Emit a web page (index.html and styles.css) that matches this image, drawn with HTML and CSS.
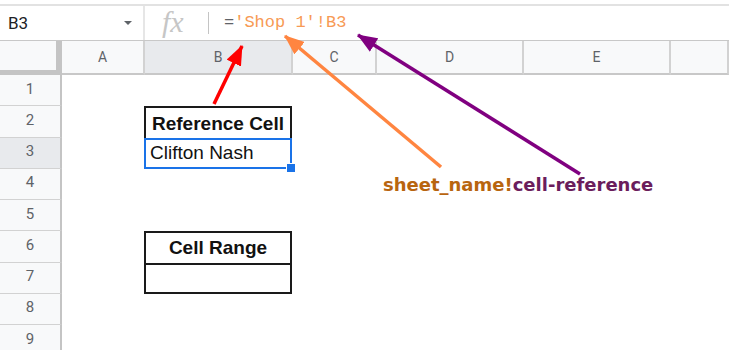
FILE: index.html
```html
<!DOCTYPE html>
<html lang="en">
<head>
    <meta charset="UTF-8">
    <meta name="viewport" content="width=device-width, initial-scale=1.0">
    <title>Sheet reference</title>
    <link rel="stylesheet" href="styles.css">
</head>
<body>
    <div class="edge"></div>
    <div class="formula-bar">
        <div class="name-box">
            <span class="cell-name">B3</span>
            <span class="caret"></span>
        </div>
        <div class="fx">fx</div>
        <div class="formula"><span class="eq">=</span><span class="ref">'Shop 1'!B3</span></div>
    </div>

    <div class="sheet">
        <div class="corner"></div>
        <div class="col-head">A</div>
        <div class="col-head active">B</div>
        <div class="col-head">C</div>
        <div class="col-head">D</div>
        <div class="col-head">E</div>
        <div class="col-head"></div>

        <div class="row-head">1</div>
        <div class="row-head">2</div>
        <div class="row-head active">3</div>
        <div class="row-head">4</div>
        <div class="row-head">5</div>
        <div class="row-head">6</div>
        <div class="row-head">7</div>
        <div class="row-head">8</div>
        <div class="row-head">9</div>

        <div class="box box-top ref-head">Reference Cell</div>
        <div class="ref-value">
            Clifton Nash
            <span class="handle"></span>
        </div>
        <div class="box box-top range-head">Cell Range</div>
        <div class="box range-value"></div>
    </div>

    <!-- annotation layer -->
    <svg class="arrows" width="729" height="350" viewBox="0 0 729 350">
        <defs>
            <marker id="head-red" markerUnits="userSpaceOnUse" markerWidth="20" markerHeight="16" refX="19" refY="8" orient="auto">
                <path d="M0,0 L20,8 L0,16 Z" fill="#ff0000"/>
            </marker>
            <marker id="head-orange" markerUnits="userSpaceOnUse" markerWidth="20" markerHeight="16" refX="19" refY="8" orient="auto">
                <path d="M0,0 L20,8 L0,16 Z" fill="#ff8540"/>
            </marker>
            <marker id="head-purple" markerUnits="userSpaceOnUse" markerWidth="20" markerHeight="16" refX="19" refY="8" orient="auto">
                <path d="M0,0 L20,8 L0,16 Z" fill="#800080"/>
            </marker>
        </defs>
        <line x1="214" y1="104" x2="242" y2="46" stroke="#ff0000" stroke-width="3.5" marker-end="url(#head-red)"/>
        <line x1="441" y1="167" x2="285" y2="36" stroke="#ff8540" stroke-width="3.5" marker-end="url(#head-orange)"/>
        <line x1="580" y1="174" x2="358" y2="35" stroke="#800080" stroke-width="3.5" marker-end="url(#head-purple)"/>
    </svg>
    <div class="note"><span class="note-sheet">sheet_name!</span><span class="note-cell">cell-reference</span></div>
</body>
</html>
```

FILE: styles.css
```css
body {
    margin: 0;
    padding: 0;
    width: 729px;
    height: 350px;
    overflow: hidden;
    position: relative;
    background-color: #fff;
    font-family: Roboto, 'Liberation Sans', sans-serif;
}

.edge {
    height: 4px;
    border-bottom: 2px solid #e2e2e2;
}

.formula-bar {
    height: 34px;
    display: flex;
    align-items: center;
}

.name-box {
    width: 145px;
    height: 100%;
    box-sizing: border-box;
    border-right: 2px solid #e6e6e6;
    display: flex;
    align-items: center;
    padding-left: 8px;
}

.cell-name {
    font-size: 17px;
    color: #202124;
}

.caret {
    margin-left: auto;
    margin-right: 11px;
    width: 0;
    height: 0;
    border-left: 4px solid transparent;
    border-right: 4px solid transparent;
    border-top: 4px solid #5f6368;
}

.fx {
    width: 64px;
    height: 22px;
    box-sizing: border-box;
    padding-left: 17px;
    border-right: 1px solid #c4c4c4;
    font-family: 'Liberation Serif', serif;
    font-style: italic;
    font-size: 30px;
    line-height: 20px;
    color: #c6c6c6;
}

.formula {
    padding-left: 15px;
    font-family: 'Liberation Mono', monospace;
    font-size: 17px;
    line-height: 20px;
}

.eq {
    color: #5f6368;
}

.ref {
    color: #f79a55;
}

.sheet {
    display: grid;
    grid-template-columns: 62px 83px 148px 84px 147px 147px 1fr;
    grid-template-rows: 34px repeat(9, 31.25px);
    border-top: 1px solid #c8c8c8;
}

.corner {
    background-color: #f8f9fa;
    border-right: 6px solid #c4c4c4;
    border-bottom: 5px solid #c4c4c4;
}

.col-head {
    background-color: #f8f9fa;
    border-right: 2px solid #d2d2d2;
    border-bottom: 2px solid #c8c8c8;
    display: flex;
    align-items: center;
    justify-content: center;
    font-size: 14px;
    color: #5f6368;
}

.col-head:last-child {
    border-right: none;
}

.row-head {
    grid-column: 1;
    background-color: #f8f9fa;
    border-right: 2px solid #c4c4c4;
    border-bottom: 1px solid #d2d2d2;
    display: flex;
    align-items: center;
    justify-content: center;
    padding-bottom: 3px;
    font-size: 15px;
    color: #5f6368;
}

.active {
    background-color: #e8eaed;
}

.box {
    grid-column: 3;
    border: 2px solid #1a1a1a;
    margin-left: -1px;
    margin-right: 1px;
    font-family: 'Liberation Sans', Arial, sans-serif;
    font-size: 19px;
    color: #111;
}

.box-top {
    font-weight: bold;
    display: flex;
    align-items: center;
    justify-content: center;
    border-bottom: none;
}

.ref-head {
    grid-row: 3;
    padding-top: 2px;
}

.ref-value {
    grid-column: 3;
    grid-row: 4;
    position: relative;
    margin-left: -1px;
    margin-right: 1px;
    border: 2px solid #1a73e8;
    padding-left: 4px;
    display: flex;
    align-items: center;
    font-family: 'Liberation Sans', Arial, sans-serif;
    font-size: 19px;
    color: #111;
}

.handle {
    position: absolute;
    right: -6px;
    bottom: -6px;
    width: 10px;
    height: 10px;
    background-color: #1a73e8;
    border: 1px solid #fff;
    box-sizing: border-box;
}

.range-head {
    grid-row: 7;
}

.range-value {
    grid-row: 8;
}

.arrows {
    position: absolute;
    top: 0;
    left: 0;
    pointer-events: none;
}

.note {
    position: absolute;
    left: 383px;
    top: 175px;
    font-family: 'DejaVu Sans', Verdana, sans-serif;
    font-weight: bold;
    font-size: 18px;
    line-height: 20px;
}

.note-sheet {
    color: #b8650f;
}

.note-cell {
    color: #6b1d5c;
}
```
